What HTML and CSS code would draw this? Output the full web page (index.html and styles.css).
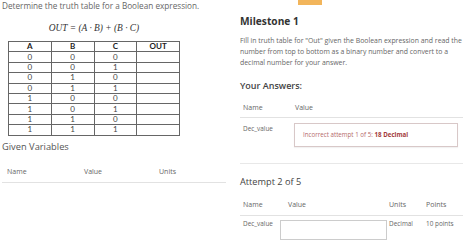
FILE: index.html
```html
<!DOCTYPE html>
<html>
<head>
<meta charset="utf-8">
<link rel="stylesheet" href="styles.css">
</head>
<body>
<div class="page">
  <div class="left">
    <div class="title">Determine the truth table for a Boolean expression.</div>
    <div class="table-wrap">
      <div class="formula">OUT = (A · B) + (B · C)</div>
      <table class="truth">
        <tr><th>A</th><th>B</th><th>C</th><th>OUT</th></tr>
        <tr><td>0</td><td>0</td><td>0</td><td></td></tr>
        <tr><td>0</td><td>0</td><td>1</td><td></td></tr>
        <tr><td>0</td><td>1</td><td>0</td><td></td></tr>
        <tr><td>0</td><td>1</td><td>1</td><td></td></tr>
        <tr><td>1</td><td>0</td><td>0</td><td></td></tr>
        <tr><td>1</td><td>0</td><td>1</td><td></td></tr>
        <tr><td>1</td><td>1</td><td>0</td><td></td></tr>
        <tr><td>1</td><td>1</td><td>1</td><td></td></tr>
      </table>
    </div>
    <div class="given">Given Variables</div>
    <div class="vars-head">
      <span class="vh-name">Name</span>
      <span class="vh-value">Value</span>
      <span class="vh-units">Units</span>
    </div>
  </div>
  <div class="right">
    <div class="orange"></div>
    <div class="milestone">Milestone 1</div>
    <p class="para">Fill in truth table for "Out" given the Boolean expression and read the number from top to bottom as a binary number and convert to a decimal number for your answer.</p>
    <div class="your">Your Answers:</div>
    <div class="ans-head">
      <span class="ah-name">Name</span>
      <span class="ah-value">Value</span>
    </div>
    <div class="ans-row">
      <span class="label">Dec_value</span>
      <div class="incorrect">Incorrect attempt 1 of 5: <b>18 Decimal</b></div>
    </div>
    <div class="attempt">Attempt 2 of 5</div>
    <div class="att-head">
      <span class="th-name">Name</span>
      <span class="th-value">Value</span>
      <span class="th-units">Units</span>
      <span class="th-points">Points</span>
    </div>
    <div class="att-row">
      <span class="label">Dec_value</span>
      <div class="input"></div>
      <span class="unit">Decimal</span>
      <span class="pts">10 points</span>
    </div>
  </div>
</div>
</body>
</html>
```

FILE: styles.css
```css
* { box-sizing: border-box; }
html, body { margin: 0; padding: 0; background: #fff; }
body { font-family: "Open Sans", "DejaVu Sans", sans-serif; color: #555; width: 474px; height: 244px; overflow: hidden; }
.page { display: flex; }
.left { width: 240px; flex: none; }
.right { width: 228px; flex: none; }

.title { height: 12px; line-height: 12px; font-size: 8.2px; padding-left: 2px; color: #666; white-space: nowrap; }
.table-wrap { margin-left: 8px; width: 172px; }
.formula { margin-top: 10px; height: 12px; line-height: 12px; text-align: center; font-family: "Liberation Serif", "DejaVu Serif", serif; font-style: italic; font-size: 9.4px; color: #333; }
.truth { margin-top: 7px; border-collapse: collapse; width: 172px; table-layout: fixed; font-family: Lato, "Liberation Sans", sans-serif; font-size: 8px; color: #444; }
.truth th, .truth td { border: 1px solid #666; height: 10.4px; padding: 0; line-height: 9px; text-align: center; }
.truth th { font-weight: 700; color: #222; }

.given { margin-top: 5px; height: 12px; line-height: 12px; font-size: 9.3px; color: #555; padding-left: 2px; }
.vars-head { margin-top: 14px; margin-left: 2px; width: 224px; display: flex; height: 16px; line-height: 10px; padding-bottom: 5px; border-bottom: 1px solid #e2e2e2; font-size: 7px; color: #666; }
.vh-name { padding-left: 5px; width: 82px; }
.vh-value { width: 75px; }

.orange { margin-left: 58px; width: 24px; height: 5px; background: #f2b55b; }
.milestone { margin-top: 9px; height: 14px; line-height: 14px; font-size: 10.2px; font-weight: 700; color: #333; }
.para { margin: 7px 0 0; font-size: 6.9px; line-height: 11px; color: #666; width: 224px; }
.your { margin-top: 12px; height: 12px; line-height: 12px; font-size: 9px; font-weight: 600; color: #444; }
.ans-head { margin-top: 11px; display: flex; height: 15px; line-height: 10px; padding-bottom: 4px; border-bottom: 1px solid #e2e2e2; font-size: 7px; color: #666; width: 223px; }
.ah-name { padding-left: 3px; width: 55px; }
.ans-row { display: flex; align-items: flex-start; padding-top: 5px; padding-bottom: 16px; border-bottom: 1px solid #e8e8e8; width: 223px; }
.label { padding-left: 3px; width: 54px; line-height: 11px; font-size: 6.4px; color: #666; flex: none; }
.incorrect { width: 164px; height: 24px; border: 1px solid #d8c8c8; line-height: 22px; padding-left: 8px; font-size: 6.2px; color: #b56a6a; box-shadow: 0 1px 1px rgba(0,0,0,0.05); }
.incorrect b { color: #a33b3b; font-weight: 700; }

.attempt { margin-top: 12px; height: 12px; line-height: 12px; font-size: 9.2px; color: #444; }
.att-head { margin-top: 12px; display: flex; height: 16px; line-height: 10px; padding-bottom: 5px; border-bottom: 1px solid #e2e2e2; font-size: 7px; color: #666; width: 223px; }
.th-name { padding-left: 3px; width: 48px; }
.th-value { width: 101px; }
.th-units { width: 37px; }
.att-row { display: flex; align-items: flex-start; width: 223px; }
.att-row .label { margin-top: 2px; width: 40px; }
.input { margin-top: 4px; width: 107px; height: 20px; border: 1px solid #ccc; flex: none; }
.unit { margin-top: 2px; margin-left: 2px; width: 37px; line-height: 11px; font-size: 6.4px; color: #666; }
.pts { margin-top: 2px; line-height: 11px; font-size: 6.4px; color: #666; }
```
